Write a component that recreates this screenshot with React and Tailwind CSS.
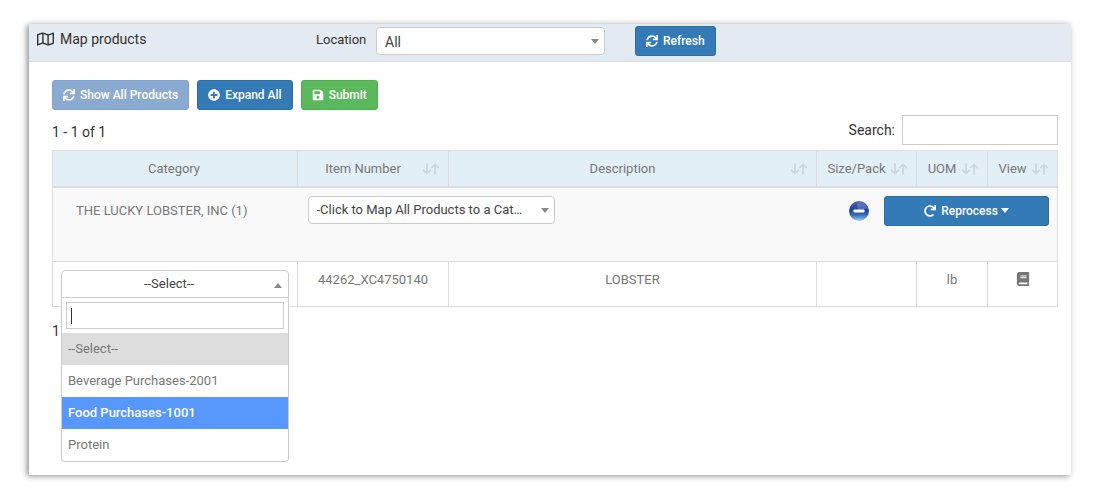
import { FaBook, FaPlusCircle, FaRedo, FaRegMap, FaSave, FaSync } from 'react-icons/fa';

const columns = [
  { label: 'Category', sortable: false },
  { label: 'Item Number', sortable: true },
  { label: 'Description', sortable: true },
  { label: 'Size/Pack', sortable: true },
  { label: 'UOM', sortable: true },
  { label: 'View', sortable: true },
];

const options = [
  { label: '--Select--', style: 'bg-[#dddddd] text-[#777777]' },
  { label: 'Beverage Purchases-2001', style: 'text-[#777777]' },
  { label: 'Food Purchases-1001', style: 'bg-[#5897fb] font-medium text-white' },
  { label: 'Protein', style: 'text-[#777777]' },
];

function SortIcon() {
  return (
    <svg viewBox="0 0 18 12" className="h-3 w-[18px] shrink-0" fill="none" stroke="#cdd7dc" strokeWidth="1.8">
      <path d="M5 0.5V10.5M1.2 6.8L5 10.6L8.8 6.8M13 11.5V1.5M9.2 5.2L13 1.4L16.8 5.2" />
    </svg>
  );
}

function Caret({ className, up }) {
  return (
    <svg viewBox="0 0 8 5" className={className} fill="currentColor" aria-hidden="true">
      <path d={up ? 'M0 5L4 0L8 5Z' : 'M0 0H8L4 5Z'} />
    </svg>
  );
}

function SelectBox({ id, label, className, children }) {
  return (
    <div className={`relative ${className}`}>
      <select
        id={id}
        aria-label={label}
        className="block h-7 w-full appearance-none overflow-hidden rounded border border-[#cccccc] bg-white pt-px pr-7 pl-2 text-ellipsis whitespace-nowrap text-[#444444]"
      >
        {children}
      </select>
      <Caret className="pointer-events-none absolute top-3 right-1.5 h-[5px] w-2 text-[#888888]" />
    </div>
  );
}

function Button({ className, icon: Icon, children }) {
  return (
    <button type="button" className={`flex h-[30px] items-center justify-center rounded-[3px] border px-2.5 text-xs font-medium whitespace-nowrap text-white ${className}`}>
      <Icon className="mr-[5px] size-3" />
      {children}
    </button>
  );
}

function CategoryPicker() {
  return (
    <div className="relative h-7">
      <button
        type="button"
        aria-haspopup="listbox"
        aria-expanded="true"
        className="relative flex h-7 w-full items-center justify-center rounded-t border border-[#cccccc] bg-white pr-3 text-[#444444]"
      >
        --Select--
        <Caret up className="absolute top-3 right-1.5 h-[5px] w-2 text-[#888888]" />
      </button>
      <div className="absolute top-7 left-0 z-10 w-full rounded-b border border-t-0 border-[#cccccc] bg-white text-left">
        <div className="relative p-1">
          <input type="text" aria-label="Filter categories" className="block h-[27px] w-full border border-[#cccccc] px-1 caret-transparent outline-none" />
          <span className="absolute top-2.5 left-[9px] h-4 w-px bg-[#333333]" />
        </div>
        <ul role="listbox" aria-label="Category">
          {options.map((o) => (
            <li key={o.label} role="option" aria-selected={o.label === '--Select--'} className={`flex h-8 items-center px-1.5 ${o.style}`}>
              {o.label}
            </li>
          ))}
        </ul>
      </div>
    </div>
  );
}

function CollapseIcon() {
  return (
    <svg viewBox="0 0 20 20" className="size-5">
      <defs>
        <linearGradient id="orb" x1="0" y1="0" x2="0" y2="1">
          <stop offset="0" stopColor="#4a69b0" />
          <stop offset="0.45" stopColor="#1f419c" />
          <stop offset="0.7" stopColor="#3a6cba" />
          <stop offset="1" stopColor="#9fd0f5" />
        </linearGradient>
        <linearGradient id="gloss" x1="0" y1="0" x2="0" y2="1">
          <stop offset="0" stopColor="#ffffff" stopOpacity="0.12" />
          <stop offset="1" stopColor="#ffffff" stopOpacity="0.22" />
        </linearGradient>
      </defs>
      <circle cx="10" cy="10" r="10" fill="url(#orb)" />
      <path d="M10 0.6A9.4 9.4 0 0 1 19 8C15 7 12 9 10 10C8 6 7 3 10 0.6Z" fill="url(#gloss)" />
      <rect x="4.5" y="8.5" width="11" height="3" rx="0.8" fill="#ffffff" />
    </svg>
  );
}

export default function App() {
  return (
    <div className="min-h-screen bg-white px-[29px] pt-6 pb-[25px] font-['Roboto',sans-serif] text-sm text-[#333333]">
      <main className="bg-white pb-[134px] shadow-[-2px_1px_6px_rgba(0,0,0,0.45)]">
        <header className="flex h-[38px] items-start border-b border-[#dddddd] bg-[#e4eaf2]">
          <h1 className="flex w-[287px] items-center pt-[5px] pl-2 leading-5">
            <FaRegMap className="mr-1.5 h-4 w-[17px]" />
            Map products
          </h1>
          <label htmlFor="location" className="w-[60px] pt-1.5 text-[13px] leading-5">Location</label>
          <SelectBox id="location" className="mt-[3px] w-[229px] text-sm">
            <option>All</option>
          </SelectBox>
          <Button icon={FaSync} className="mt-0.5 ml-[30px] border-[#2e6da4] bg-[#337ab7]">Refresh</Button>
        </header>

        <section className="pt-[18px] pr-[13px] pl-[23px]">
          <div className="flex gap-2">
            <Button icon={FaSync} className="border-[#7fa3cc] bg-[#8aaad1]">Show All Products</Button>
            <Button icon={FaPlusCircle} className="border-[#2e6da4] bg-[#337ab7]">Expand All</Button>
            <Button icon={FaSave} className="border-[#4cae4c] bg-[#5cb85c]">Submit</Button>
          </div>

          <div className="mt-[5px] mb-[5px] flex items-center justify-between">
            <p className="pt-1">1 - 1 of 1</p>
            <div className="flex items-center">
              <label htmlFor="search" className="mr-[7px]">Search:</label>
              <input id="search" type="text" className="h-[30px] w-[156px] border border-[#cccccc] px-2" />
            </div>
          </div>

          <table className="w-full table-fixed border-collapse border border-[#dddddd] text-center text-[13px] leading-5 text-[#777777]">
            <colgroup>
              <col className="w-[245px]" />
              <col className="w-[151px]" />
              <col />
              <col className="w-[100px]" />
              <col className="w-[71px]" />
              <col className="w-[70px]" />
            </colgroup>
            <thead>
              <tr className="h-9 border-b-2 border-[#dddddd] bg-[#e2eff7]">
                {columns.map((c) => (
                  <th key={c.label} scope="col" className="border-x border-[#dddddd] pt-px pr-2 pl-1.5 font-normal">
                    <div className="flex items-center">
                      <span className="grow">{c.label}</span>
                      {c.sortable && <SortIcon />}
                    </div>
                  </th>
                ))}
              </tr>
            </thead>
            <tbody>
              <tr className="h-[75px] border-b border-[#dddddd] bg-[#f9f9f9] align-top">
                <td className="pt-[13px] pl-[23px] text-left">THE LUCKY LOBSTER, INC (1)</td>
                <td colSpan={5} className="pt-2 pr-2 pl-2.5">
                  <div className="flex items-start">
                    <SelectBox id="map-all" label="Map all products" className="w-[247px]">
                      <option>-Click to Map All Products to a Category-</option>
                    </SelectBox>
                    <button type="button" aria-label="Collapse" className="mt-[5px] mr-[15px] ml-auto">
                      <CollapseIcon />
                    </button>
                    <Button icon={FaRedo} className="w-[165px] border-[#2e6da4] bg-[#337ab7]">
                      Reprocess
                      <Caret className="ml-[3px] h-[5px] w-2" />
                    </Button>
                  </div>
                </td>
              </tr>
              <tr className="h-[45px] align-top">
                <td className="px-2 pt-2">
                  <CategoryPicker />
                </td>
                <td className="border border-[#dddddd] pt-2">44262_XC4750140</td>
                <td className="border border-[#dddddd] pt-2">LOBSTER</td>
                <td className="border border-[#dddddd] pt-2" />
                <td className="border border-[#dddddd] pt-2">lb</td>
                <td className="border border-[#dddddd] pt-2.5">
                  <button type="button" aria-label="View" className="block w-full">
                    <FaBook className="mx-auto size-3.5" />
                  </button>
                </td>
              </tr>
            </tbody>
          </table>
          <p className="mt-3.5">1 - 1 of 1</p>
        </section>
      </main>
    </div>
  );
}
